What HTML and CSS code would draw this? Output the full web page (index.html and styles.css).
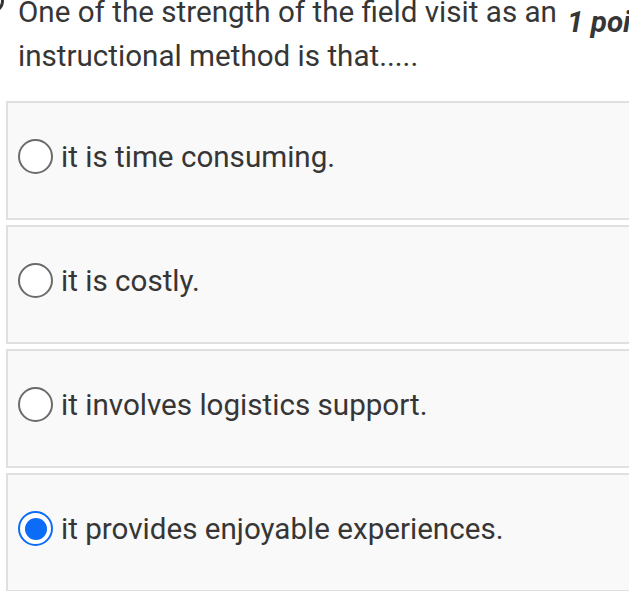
FILE: index.html
```html
<!DOCTYPE html>
<html>
<head>
<meta charset="utf-8">
<link rel="stylesheet" href="styles.css">
</head>
<body>
<div class="page">
  <span class="mark"></span>
  <div class="head">
    <div class="question">One of the strength of the field visit as an instructional method is that.....</div>
    <div class="points">1 point</div>
  </div>
  <div class="options">
    <label class="card"><span class="radio"></span><span class="text">it is time consuming.</span></label>
    <label class="card"><span class="radio"></span><span class="text">it is costly.</span></label>
    <label class="card"><span class="radio"></span><span class="text">it involves logistics support.</span></label>
    <label class="card"><span class="radio checked"></span><span class="text">it provides enjoyable experiences.</span></label>
  </div>
</div>
</body>
</html>
```
FILE: styles.css
```css
html, body {
  margin: 0;
  padding: 0;
  background: #ffffff;
  overflow: hidden;
}
.page {
  position: relative;
  width: 720px;
  font-family: Roboto, "Liberation Sans", sans-serif;
  color: #363636;
}
.mark {
  position: absolute;
  left: -20px;
  top: -1px;
  width: 18px;
  height: 18px;
  border: 3px solid #333333;
  border-radius: 50%;
}
.head {
  display: flex;
  align-items: flex-start;
  margin-top: -10px;
  padding-left: 18px;
}
.question {
  flex: 0 0 545px;
  font-size: 29.6px;
  line-height: 44px;
}
.points {
  flex: 0 0 auto;
  margin-left: 4px;
  margin-top: 10px;
  font-size: 29.6px;
  line-height: 44px;
  font-weight: 700;
  font-style: italic;
  white-space: nowrap;
}
.options {
  display: flex;
  flex-direction: column;
  gap: 5px;
  margin-top: 23px;
  margin-left: 6px;
}
.card {
  box-sizing: border-box;
  height: 119px;
  display: flex;
  align-items: center;
  gap: 8px;
  padding: 0 0 8px 10px;
  background: #f9f9f9;
  border: 2px solid #e0e0e0;
}
.radio {
  box-sizing: border-box;
  flex: 0 0 35px;
  width: 35px;
  height: 35px;
  border: 2px solid #6b6b6b;
  border-radius: 50%;
  background: #ffffff;
  display: flex;
  align-items: center;
  justify-content: center;
}
.radio.checked {
  border: 2.5px solid #0b6cf8;
}
.radio.checked::after {
  content: "";
  width: 22px;
  height: 22px;
  border-radius: 50%;
  background: #0b6cf8;
}
.text {
  font-size: 29.6px;
  white-space: nowrap;
}
```
